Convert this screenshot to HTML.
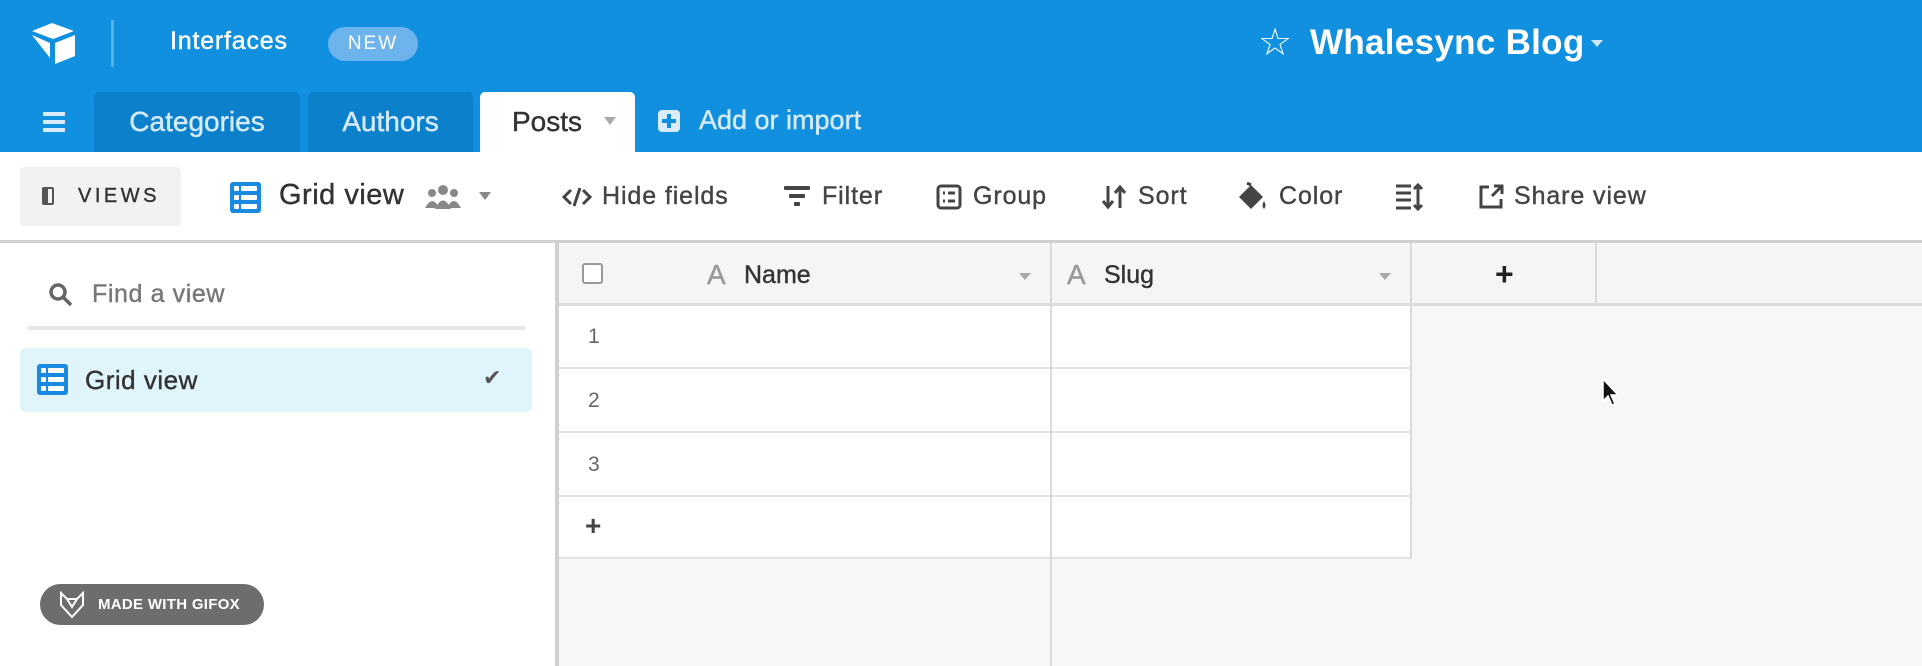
<!DOCTYPE html>
<html><head><meta charset="utf-8"><style>
*{box-sizing:border-box;margin:0;padding:0}
body{width:1922px;height:666px;overflow:hidden;background:#f7f7f7;font-family:"Liberation Sans",sans-serif;position:relative;color:#333}
.a{position:absolute}
.m{-webkit-text-stroke:0.4px currentColor}
.blue{background:#1190df;left:0;top:0;width:1922px;height:152px}
.w{color:#fff}
.tab{position:absolute;top:92px;height:60px;border-radius:5px 5px 0 0;font-size:28px;line-height:60px;text-align:center;-webkit-text-stroke:0.4px currentColor}
.tb{font-size:25px;color:#444;top:182px;line-height:28px;letter-spacing:0.9px;-webkit-text-stroke:0.4px currentColor}
.hl{position:absolute;height:2px;background:#e2e2e2}
.vl{position:absolute;width:2px;background:#dadada}
.num{position:absolute;left:588px;font-size:21px;color:#666}
</style></head><body>
<div class="a blue"></div>
<svg class="a" style="left:30px;top:22px" width="47" height="43" viewBox="0 0 47 43">
<path d="M22 1 L44 9 L23 17 L2 9 Z" fill="#fff"/><path d="M25 21 L45 13 V34 L25 42 Z" fill="#fff"/><path d="M2 13 L20 21 V36 Z" fill="#fff"/></svg>
<div class="a" style="left:111px;top:20px;width:3px;height:47px;background:#5aaeea"></div>
<div class="a w m" style="left:170px;top:27px;font-size:25px;letter-spacing:0.8px">Interfaces</div>
<div class="a w" style="left:328px;top:27px;width:90px;height:34px;border-radius:17px;background:#6db4ec;font-size:19px;line-height:34px;text-align:center;letter-spacing:2px">NEW</div>
<div class="a w" style="left:1258px;top:20px;font-size:38px;line-height:46px">☆</div>
<div class="a w" style="left:1310px;top:23px;font-size:35px;font-weight:bold;letter-spacing:0.3px">Whalesync Blog</div>
<div class="a" style="left:1591px;top:40px;border-left:6px solid transparent;border-right:6px solid transparent;border-top:7px solid #cfe7fb"></div>
<div class="a" style="left:43px;top:112px;width:22px;height:4px;background:#d8ecfb;box-shadow:0 8px 0 #d8ecfb,0 16px 0 #d8ecfb"></div>
<div class="tab" style="left:94px;width:206px;background:#0d80cc;color:#d6ebfb">Categories</div>
<div class="tab" style="left:308px;width:165px;background:#0d80cc;color:#d6ebfb">Authors</div>
<div class="tab" style="left:480px;width:155px;background:#fff;color:#333;text-align:left;padding-left:32px">Posts</div>
<div class="a" style="left:604px;top:117px;border-left:6px solid transparent;border-right:6px solid transparent;border-top:8px solid #aaa"></div>
<div class="a" style="left:658px;top:110px;width:22px;height:22px;border-radius:4px;background:#d8ecfb"></div>
<div class="a" style="left:667px;top:114px;width:4px;height:14px;background:#1190df"></div>
<div class="a" style="left:662px;top:119px;width:14px;height:4px;background:#1190df"></div>
<div class="a m" style="left:699px;top:105px;font-size:27px;color:#d6ebfb">Add or import</div>
<div class="a" style="left:0;top:152px;width:1922px;height:88px;background:#fff"></div>
<div class="a" style="left:0;top:240px;width:1922px;height:3px;background:#d0d0d0"></div>
<div class="a" style="left:20px;top:167px;width:161px;height:59px;background:#f2f2f2;border-radius:4px"></div>
<div class="a" style="left:42px;top:187px;width:12px;height:18px;border:2px solid #555;border-radius:2px;background:linear-gradient(90deg,#555 50%,transparent 50%)"></div>
<div class="a m" style="left:78px;top:185px;font-size:20px;letter-spacing:3.5px;color:#333">VIEWS</div>
<svg class="a" style="left:230px;top:182px" width="31" height="31" viewBox="0 0 31 31"><rect width="31" height="31" rx="3" fill="#1a8ae0"/><g fill="#fff"><rect x="4" y="4" width="5" height="5" rx="1"/><rect x="11" y="4" width="16" height="5" rx="1"/><rect x="4" y="13" width="5" height="5" rx="1"/><rect x="11" y="13" width="16" height="5" rx="1"/><rect x="4" y="22" width="5" height="5" rx="1"/><rect x="11" y="22" width="16" height="5" rx="1"/></g></svg>
<div class="a m" style="left:279px;top:179px;font-size:29px;color:#333;letter-spacing:0.5px">Grid view</div>
<svg class="a" style="left:425px;top:184px" width="36" height="26" viewBox="0 0 36 26"><g fill="#888"><circle cx="18" cy="6" r="5"/><circle cx="7" cy="9" r="4"/><circle cx="29" cy="9" r="4"/><path d="M10 25 Q18 8 26 25Z"/><path d="M0 24 Q7 11 13 22 L11 24Z"/><path d="M36 24 Q29 11 23 22 L25 24Z"/></g></svg>
<div class="a" style="left:479px;top:192px;border-left:6px solid transparent;border-right:6px solid transparent;border-top:8px solid #888"></div>
<svg class="a" style="left:562px;top:187px" width="30" height="20" viewBox="0 0 30 20" fill="none" stroke="#444" stroke-width="3"><path d="M9 3 L2 10 L9 17 M21 3 L28 10 L21 17 M18 1 L12 19"/></svg>
<div class="a tb" style="left:602px">Hide fields</div>
<svg class="a" style="left:784px;top:186px" width="26" height="22" viewBox="0 0 26 22" fill="#444"><rect x="0" y="0" width="26" height="4" rx="1"/><rect x="5" y="8" width="16" height="4" rx="1"/><rect x="10" y="16" width="6" height="4" rx="1"/></svg>
<div class="a tb" style="left:822px">Filter</div>
<svg class="a" style="left:936px;top:184px" width="26" height="26" viewBox="0 0 26 26" fill="none" stroke="#444" stroke-width="3"><rect x="2" y="2" width="22" height="22" rx="3"/><path d="M7 9h2M12 9h7M7 17h2M12 17h7"/></svg>
<div class="a tb" style="left:973px">Group</div>
<svg class="a" style="left:1101px;top:184px" width="26" height="26" viewBox="0 0 26 26" fill="none" stroke="#444" stroke-width="3"><path d="M7 2v20M2 17l5 6 5-6M19 24V4M14 9l5-6 5 6"/></svg>
<div class="a tb" style="left:1138px">Sort</div>
<svg class="a" style="left:1238px;top:182px" width="30" height="30" viewBox="0 0 30 30" fill="#444"><path d="M13 3 L25 15 L13 27 L1 15 Z"/><path d="M26 19 Q29 24 26 27 Q23 24 26 19Z"/><path d="M9 1 L13 3" stroke="#444" stroke-width="3"/></svg>
<div class="a tb" style="left:1279px">Color</div>
<svg class="a" style="left:1396px;top:183px" width="28" height="28" viewBox="0 0 28 28" fill="none" stroke="#444" stroke-width="3"><path d="M0 3h15M0 10h15M0 17h15M0 25h15M22 2v24M18 6l4-4 4 4M18 22l4 4 4-4"/></svg>
<svg class="a" style="left:1478px;top:184px" width="26" height="26" viewBox="0 0 26 26" fill="none" stroke="#444" stroke-width="3"><path d="M11 3H3v20h20v-8M14 12L24 2M16 2h8v8"/></svg>
<div class="a tb" style="left:1514px">Share view</div>
<div class="a" style="left:0;top:243px;width:555px;height:423px;background:#fff"></div>
<div class="a" style="left:555px;top:243px;width:4px;height:423px;background:#d0d0d0"></div>
<svg class="a" style="left:48px;top:282px" width="26" height="26" viewBox="0 0 26 26" fill="none" stroke="#666" stroke-width="3.5"><circle cx="10" cy="10" r="7"/><path d="M15 15l8 8"/></svg>
<div class="a m" style="left:92px;top:280px;font-size:25px;color:#777;letter-spacing:0.6px">Find a view</div>
<div class="a" style="left:28px;top:326px;width:497px;height:4px;background:#e6e6e6"></div>
<div class="a" style="left:20px;top:348px;width:512px;height:64px;background:#e0f4fc;border-radius:5px"></div>
<svg class="a" style="left:37px;top:364px" width="31" height="31" viewBox="0 0 31 31"><rect width="31" height="31" rx="3" fill="#1a8ae0"/><g fill="#fff"><rect x="4" y="4" width="5" height="5" rx="1"/><rect x="11" y="4" width="16" height="5" rx="1"/><rect x="4" y="13" width="5" height="5" rx="1"/><rect x="11" y="13" width="16" height="5" rx="1"/><rect x="4" y="22" width="5" height="5" rx="1"/><rect x="11" y="22" width="16" height="5" rx="1"/></g></svg>
<div class="a m" style="left:85px;top:365px;font-size:26px;color:#333;letter-spacing:0.5px">Grid view</div>
<div class="a" style="left:483px;top:365px;font-size:22px;color:#555">✔</div>
<div class="a" style="left:40px;top:584px;width:224px;height:41px;background:#6d6d6d;border-radius:21px"></div>
<svg class="a" style="left:58px;top:591px" width="28" height="28" viewBox="0 0 28 28" fill="none" stroke="#fff" stroke-width="2"><path d="M3 2 L9 8 H19 L25 2 L25 14 L14 26 L3 14 Z M9 8 L14 16 L19 8"/></svg>
<div class="a" style="left:98px;top:596px;font-size:15px;font-weight:bold;color:#fff;letter-spacing:0.3px">MADE WITH GIFOX</div>
<div class="a" style="left:559px;top:243px;width:1363px;height:62px;background:#f5f5f5"></div>
<div class="hl" style="left:559px;top:303px;width:1363px;height:3px;background:#dcdcdc"></div>
<div class="a" style="left:559px;top:306px;width:852px;height:253px;background:#fff"></div>
<div class="hl" style="left:559px;top:367px;width:852px"></div>
<div class="hl" style="left:559px;top:431px;width:852px"></div>
<div class="hl" style="left:559px;top:495px;width:852px"></div>
<div class="hl" style="left:559px;top:557px;width:852px"></div>
<div class="vl" style="left:1050px;top:243px;height:423px"></div>
<div class="vl" style="left:1410px;top:243px;height:316px"></div>
<div class="vl" style="left:1595px;top:243px;height:61px"></div>
<div class="a" style="left:582px;top:263px;width:21px;height:21px;border:2px solid #999;border-radius:3px;background:#fff"></div>
<div class="a m" style="left:707px;top:259px;font-size:28px;color:#999">A</div>
<div class="a m" style="left:744px;top:261px;font-size:25px;color:#333">Name</div>
<div class="a" style="left:1019px;top:273px;border-left:6px solid transparent;border-right:6px solid transparent;border-top:7px solid #aaa"></div>
<div class="a m" style="left:1067px;top:259px;font-size:28px;color:#999">A</div>
<div class="a m" style="left:1104px;top:261px;font-size:25px;color:#333">Slug</div>
<div class="a" style="left:1379px;top:273px;border-left:6px solid transparent;border-right:6px solid transparent;border-top:7px solid #aaa"></div>
<div class="a" style="left:1495px;top:256px;font-size:32px;font-weight:bold;color:#222">+</div>
<div class="num" style="top:325px">1</div>
<div class="num" style="top:389px">2</div>
<div class="num" style="top:453px">3</div>
<div class="a" style="left:585px;top:510px;font-size:28px;font-weight:bold;color:#444">+</div>
<svg class="a" style="left:1601px;top:378px" width="20" height="30" viewBox="0 0 20 30"><path d="M2 1 V23 L7 18 L11 27 L14 26 L10 17 H17 Z" fill="#111" stroke="#fff" stroke-width="1.5"/></svg>
</body></html>
